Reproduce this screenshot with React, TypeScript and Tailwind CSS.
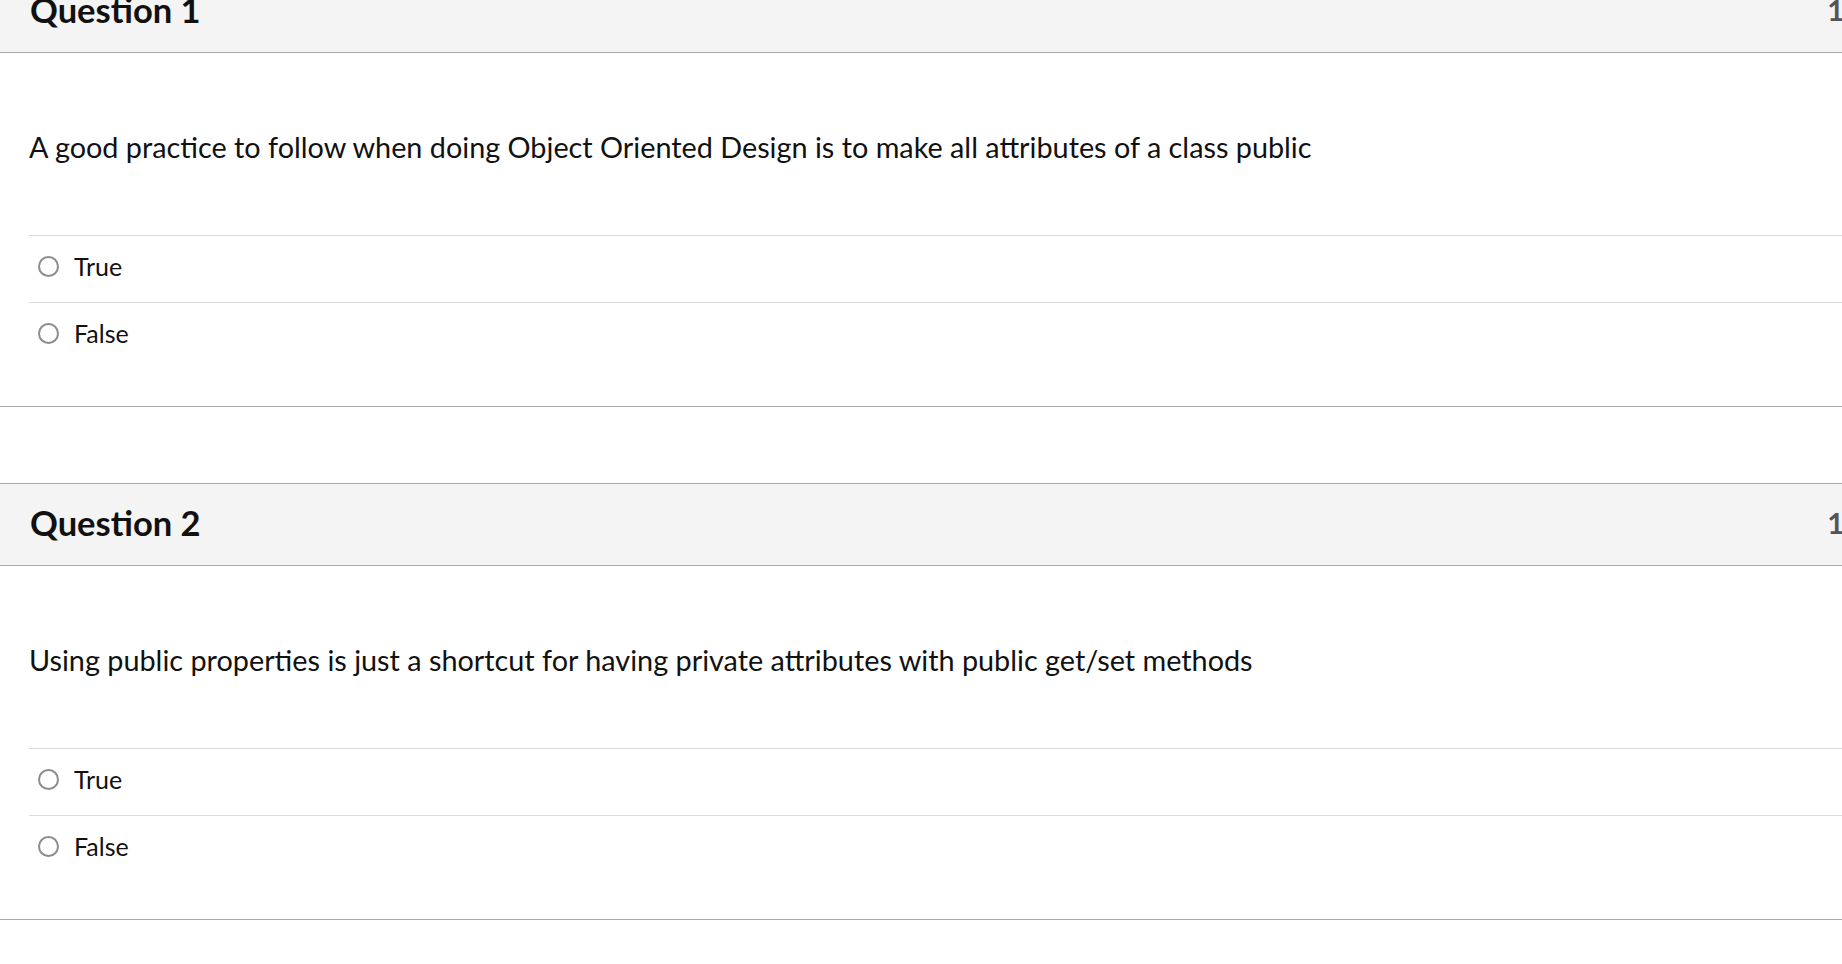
const questions = [
  {
    n: 1,
    text: "A good practice to follow when doing Object Oriented Design is to make all attributes of a class public",
  },
  {
    n: 2,
    text: "Using public properties is just a shortcut for having private attributes with public get/set methods",
  },
];

function Radio() {
  return <span className="block h-[21px] w-[21px] shrink-0 rounded-full border-2 border-[#8c8c8c] bg-white" />;
}

function Question({ n, text }: { n: number; text: string }) {
  return (
    <div className="border-y border-[#a8a8a8] bg-white">
      <div className="flex h-[82px] items-center justify-between border-b border-[#a8a8a8] bg-[#f4f4f4] px-[30px] pb-[4px]">
        <h2 className="text-[34.5px] font-bold text-[#111]">Question {n}</h2>
        <span className="text-[29px] font-bold text-[#555]">1 pts</span>
      </div>
      <div className="pl-[29px] pt-[73px] pb-[37px]">
        <p className="mb-[67px] text-[28.8px] leading-[42px] text-[#111]">{text}</p>
        <label className="flex h-[68px] items-center gap-[15px] border-y border-[#dcdcdc] pb-[5px] pl-[9px]">
          <Radio />
          <span className="text-[25px] text-[#111]">True</span>
        </label>
        <label className="flex h-[66px] items-center gap-[15px] pb-[5px] pl-[9px]">
          <Radio />
          <span className="text-[25px] text-[#111]">False</span>
        </label>
      </div>
    </div>
  );
}

export default function App() {
  return (
    <div className="h-[964px] overflow-hidden bg-white font-['Lato',sans-serif]">
      <div className="-mt-[30px] flex w-[1921px] flex-col gap-[76px]">
        {questions.map((q) => (
          <Question key={q.n} {...q} />
        ))}
      </div>
    </div>
  );
}
